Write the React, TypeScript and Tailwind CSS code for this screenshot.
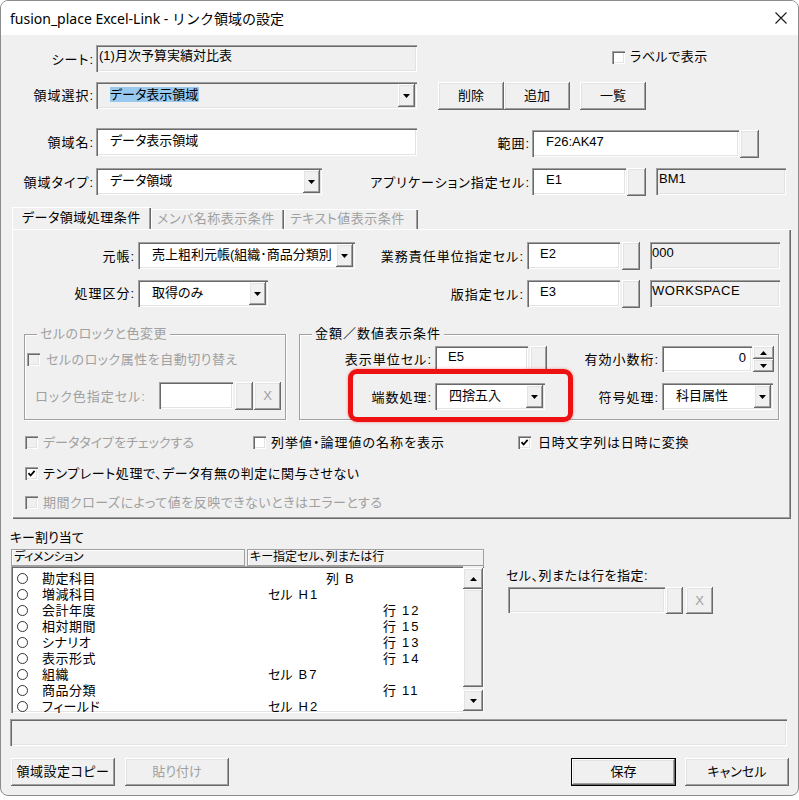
import React from "react";

const SUNK =
  "shadow-[inset_1px_1px_0_#a0a0a0,inset_2px_2px_0_#696969,inset_-1px_-1px_0_#ffffff,inset_-2px_-2px_0_#e3e3e3]";
const RAISE =
  "shadow-[inset_-1px_-1px_0_#696969,inset_1px_1px_0_#ffffff,inset_-2px_-2px_0_#a0a0a0,inset_2px_2px_0_#e3e3e3]";

type P = { cls?: string; children?: React.ReactNode };

function L({ cls = "", children }: P) {
  return (
    <div className={`shrink-0 text-right tracking-[1px] leading-[16px] whitespace-nowrap ${cls}`}>{children}</div>
  );
}

function TB({ cls = "", children }: P) {
  return (
    <div className={`shrink-0 ${SUNK} leading-[16px] whitespace-nowrap overflow-hidden ${cls}`}>{children}</div>
  );
}

function Btn({ cls = "", children }: P) {
  return (
    <div className={`shrink-0 ${RAISE} bg-[#f0f0f0] flex items-center justify-center leading-[16px] ${cls}`}>
      {children}
    </div>
  );
}

function Down() {
  return (
    <svg width="7" height="4" viewBox="0 0 7 4">
      <path d="M0 0H7L3.5 4Z" fill="#000" />
    </svg>
  );
}
function Up() {
  return (
    <svg width="7" height="4" viewBox="0 0 7 4">
      <path d="M0 4H7L3.5 0Z" fill="#000" />
    </svg>
  );
}

function Combo({ cls = "", children, bg = "bg-white" }: P & { bg?: string }) {
  return (
    <div className={`shrink-0 ${SUNK} ${bg} h-[27px] flex items-stretch p-[2px] ${cls}`}>
      <div className="flex-1 pl-[12px] pt-[3px] leading-[16px] whitespace-nowrap overflow-hidden">{children}</div>
      <div className={`${RAISE} w-[17px] bg-[#f0f0f0] flex items-center justify-center`}>
        <Down />
      </div>
    </div>
  );
}

function Check({ checked = false, disabled = false }: { checked?: boolean; disabled?: boolean }) {
  return (
    <span
      className={`shrink-0 w-[13px] h-[13px] ${SUNK} ${disabled ? "bg-[#f0f0f0]" : "bg-white"} flex items-center justify-center`}
    >
      {checked && (
        <svg width="9" height="9" viewBox="0 0 9 9">
          <path d="M1.5 4.2L3.6 6.5L7.6 1.8" stroke="#000" strokeWidth="1.8" fill="none" />
        </svg>
      )}
    </span>
  );
}

const rows: [string, "col" | "cell" | "row", string, string][] = [
  ["勘定科目", "col", "列", "B"],
  ["増減科目", "cell", "セル", "H1"],
  ["会計年度", "row", "行", "12"],
  ["相対期間", "row", "行", "15"],
  ["シナリオ", "row", "行", "13"],
  ["表示形式", "row", "行", "14"],
  ["組織", "cell", "セル", "B7"],
  ["商品分類", "row", "行", "11"],
  ["フィールド", "cell", "セル", "H2"],
];

const keyMl = { col: "ml-[58px]", cell: "ml-0", row: "ml-[115px]" };

export default function App() {
  return (
    <div className="w-[799px] h-[800px] bg-white overflow-hidden text-[13px] text-black font-['Liberation_Sans','Noto_Sans_CJK_JP',sans-serif] [font-feature-settings:'palt']">
      <div className="w-[799px] h-[796px] flex flex-col rounded-[8px] border border-[#8c8c8c] bg-[#f0f0f0] overflow-hidden">
        {/* title bar */}
        <div className="h-[34px] shrink-0 bg-white flex items-center justify-between pl-[9px] pr-[11px]">
          <span className="text-[14px] font-['Noto_Sans','Noto_Sans_CJK_JP',sans-serif] [font-feature-settings:normal]">
            fusion_place Excel-Link - リンク領域の設定
          </span>
          <svg width="12" height="12" viewBox="0 0 12 12">
            <path d="M0.5 0.5L11.5 11.5M11.5 0.5L0.5 11.5" stroke="#1a1a1a" strokeWidth="1.1" />
          </svg>
        </div>

        {/* row 1 */}
        <div className="flex items-start mt-[10px] h-[27px]">
          <L cls="w-[93px] pt-[7px]">シート:</L>
          <TB cls="ml-[2px] w-[321px] h-[27px] bg-[#f0f0f0] pl-[3px] pt-[3px]">(1)月次予算実績対比表</TB>
          <div className="ml-[195px] mt-[4px] flex items-center gap-[5px]">
            <Check />
            <span className="leading-[16px] tracking-[0.5px]">ラベルで表示</span>
          </div>
        </div>

        {/* row 2 */}
        <div className="flex items-start mt-[10px] h-[28px]">
          <L cls="w-[93px] pt-[6px]">領域選択:</L>
          <Combo cls="ml-[2px] w-[321px]" bg="bg-[#f0f0f0]">
            <span className="bg-[#99c9ef] pr-[1px]">データ表示領域</span>
          </Combo>
          <Btn cls="ml-[21px] w-[66px] h-[28px]">削除</Btn>
          <Btn cls="w-[66px] h-[28px]">追加</Btn>
          <Btn cls="ml-[10px] w-[66px] h-[28px]">一覧</Btn>
        </div>

        {/* row 3 */}
        <div className="flex items-start mt-[18px] h-[30px]">
          <L cls="w-[93px] pt-[7px]">領域名:</L>
          <TB cls="ml-[2px] w-[321px] h-[28px] bg-white pl-[14px] pt-[5px]">データ表示領域</TB>
          <L cls="w-[113px] pt-[8px]">範囲:</L>
          <TB cls="ml-[2px] mt-[2px] w-[207px] h-[27px] bg-white pl-[14px] pt-[4px]">F26:AK47</TB>
          <Btn cls="ml-[1px] mt-[2px] w-[19px] h-[28px]" />
        </div>

        {/* row 4 */}
        <div className="flex items-start mt-[10px] h-[28px]">
          <L cls="w-[93px] pt-[7px]">領域タイプ:</L>
          <Combo cls="ml-[2px] w-[226px]">データ領域</Combo>
          <L cls="w-[208px] pt-[7px] tracking-[0.3px]">アプリケーション指定セル:</L>
          <TB cls="ml-[2px] w-[94px] h-[27px] bg-white pl-[14px] pt-[4px]">E1</TB>
          <Btn cls="ml-[1px] w-[19px] h-[28px]" />
          <TB cls="ml-[10px] w-[130px] h-[27px] bg-[#f0f0f0] pl-[3px] pt-[3px]">BM1</TB>
        </div>

        {/* tabs */}
        <div className="flex items-end mt-[11px] ml-[11px] h-[22px]">
          <div className="w-[139px] h-[22px] bg-[#f0f0f0] shadow-[inset_1px_1px_0_#ffffff,inset_-1px_0_0_#696969,inset_-2px_0_0_#a0a0a0] pl-[10px] pt-[3px] leading-[16px] tracking-[0.5px] relative z-10">
            データ領域処理条件
          </div>
          <div className="w-[133px] h-[20px] shadow-[inset_1px_1px_0_#ffffff,inset_-1px_0_0_#696969,inset_-2px_0_0_#a0a0a0] pl-[6px] pt-[2px] leading-[16px] tracking-[0.5px] text-[#a0a0a0]">
            メンバ名称表示条件
          </div>
          <div className="w-[134px] h-[20px] shadow-[inset_1px_1px_0_#ffffff,inset_-1px_0_0_#696969,inset_-2px_0_0_#a0a0a0] pl-[6px] pt-[2px] leading-[16px] tracking-[0.5px] text-[#a0a0a0]">
            テキスト値表示条件
          </div>
        </div>

        {/* panel */}
        <div className="ml-[11px] w-[779px] h-[290px] shrink-0 flex flex-col shadow-[inset_1px_1px_0_#ffffff,inset_-1px_-1px_0_#696969,inset_-2px_-2px_0_#a0a0a0]">
          {/* row A */}
          <div className="flex items-start mt-[13px] h-[28px]">
            <L cls="w-[123px] pt-[7px]">元帳:</L>
            <Combo cls="ml-[3px] w-[217px]">売上粗利元帳(組織･商品分類別</Combo>
            <L cls="w-[169px] pt-[7px]">業務責任単位指定セル:</L>
            <TB cls="ml-[3px] w-[93px] h-[27px] bg-white pl-[13px] pt-[4px]">E2</TB>
            <Btn cls="ml-[2px] w-[18px] h-[28px]" />
            <TB cls="ml-[10px] w-[130px] h-[27px] bg-[#f0f0f0] pl-[2px] pt-[3px]">000</TB>
          </div>
          {/* row B */}
          <div className="flex items-start mt-[10px] h-[28px]">
            <L cls="w-[123px] pt-[6px]">処理区分:</L>
            <Combo cls="ml-[3px] w-[130px]">取得のみ</Combo>
            <L cls="w-[256px] pt-[7px]">版指定セル:</L>
            <TB cls="ml-[3px] w-[93px] h-[27px] bg-white pl-[13px] pt-[4px]">E3</TB>
            <Btn cls="ml-[2px] w-[18px] h-[28px]" />
            <TB cls="ml-[10px] w-[130px] h-[27px] bg-[#f0f0f0] pl-[2px] pt-[3px] tracking-[0.5px]">WORKSPACE</TB>
          </div>

          {/* groups */}
          <div className="flex items-start mt-[26px] h-[86px]">
            <div className="relative ml-[12px] w-[262px] h-[86px] border border-[#a0a0a0] shadow-[inset_1px_1px_0_#ffffff,1px_1px_0_#ffffff] pl-[2px] pt-[18px]">
              <span className="absolute left-[12px] -top-[9px] px-[3px] bg-[#f0f0f0] leading-[16px] tracking-[0.5px] text-[#a0a0a0]">
                セルのロックと色変更
              </span>
              <div className="flex items-center gap-[6px] h-[13px]">
                <Check disabled />
                <span className="leading-[16px] tracking-[0.5px] text-[#a0a0a0]">セルのロック属性を自動切り替え</span>
              </div>
              <div className="flex items-start mt-[16px]">
                <L cls="w-[119px] pt-[7px] text-[#a0a0a0] tracking-[0.3px]">ロック色指定セル:</L>
                <TB cls="ml-[13px] w-[74px] h-[27px] bg-white" />
                <Btn cls="ml-[2px] w-[18px] h-[28px]" />
                <Btn cls="ml-[1px] w-[27px] h-[28px] text-[#a0a0a0]">X</Btn>
              </div>
            </div>

            <div className="relative ml-[13px] w-[480px] h-[86px] border border-[#a0a0a0] shadow-[inset_1px_1px_0_#ffffff,1px_1px_0_#ffffff] pt-[11px]">
              <span className="absolute left-[12px] -top-[9px] px-[3px] bg-[#f0f0f0] leading-[16px] tracking-[1px]">
                金額／数値表示条件
              </span>
              <div className="flex items-start h-[27px]">
                <L cls="w-[132px] pt-[6px]">表示単位セル:</L>
                <TB cls="ml-[3px] w-[93px] h-[26px] bg-white pl-[13px] pt-[3px]">E5</TB>
                <Btn cls="ml-[2px] w-[17px] h-[27px]" />
                <L cls="w-[112px] pt-[6px]">有効小数桁:</L>
                <TB cls="ml-[3px] w-[90px] h-[26px] bg-white pr-[6px] pt-[4px] text-right">0</TB>
                <div className="ml-[1px] w-[21px] h-[26px] flex flex-col">
                  <Btn cls="h-[13px]">
                    <Up />
                  </Btn>
                  <Btn cls="h-[13px]">
                    <Down />
                  </Btn>
                </div>
              </div>
              <div className="flex items-start mt-[10px] h-[27px]">
                <L cls="w-[132px] pt-[7px]">端数処理:</L>
                <Combo cls="ml-[3px] w-[110px]">四捨五入</Combo>
                <L cls="w-[114px] pt-[7px]">符号処理:</L>
                <Combo cls="ml-[3px] w-[111px]">科目属性</Combo>
              </div>
              <div className="pointer-events-none absolute left-[48px] top-[34px] w-[225px] h-[53px] border-[5px] border-[#ee1111] rounded-[9px] shadow-[0_0_3px_rgba(238,17,17,0.45)]" />
            </div>
          </div>

          {/* checkbox rows */}
          <div className="flex items-center mt-[16px] h-[13px]">
            <div className="ml-[13px] w-[228px] flex items-center gap-[5px]">
              <Check disabled />
              <span className="leading-[16px] text-[#a0a0a0]">データタイプをチェックする</span>
            </div>
            <div className="w-[265px] flex items-center gap-[5px]">
              <Check />
              <span className="leading-[16px] tracking-[1px]">列挙値・論理値の名称を表示</span>
            </div>
            <div className="flex items-center gap-[7px]">
              <Check checked />
              <span className="leading-[16px] tracking-[0.8px]">日時文字列は日時に変換</span>
            </div>
          </div>
          <div className="flex items-center mt-[18px] h-[13px] ml-[13px] gap-[5px]">
            <Check checked />
            <span className="leading-[16px] tracking-[0.6px]">テンプレート処理で、データ有無の判定に関与させない</span>
          </div>
          <div className="flex items-center mt-[16px] h-[13px] ml-[13px] gap-[5px]">
            <Check disabled />
            <span className="leading-[16px] tracking-[0.5px] text-[#a0a0a0]">
              期間クローズによって値を反映できないときはエラーとする
            </span>
          </div>
        </div>

        {/* key assignment */}
        <div className="mt-[11px] ml-[9px] leading-[16px]">キー割り当て</div>
        <div className="flex items-start mt-[3px]">
          <div className="ml-[10px] w-[473px] flex flex-col">
            <div className="flex h-[17px] gap-[2px]">
              <div className="w-[234px] h-[17px] border border-[#a0a0a0] shadow-[inset_1px_1px_0_#ffffff] pl-[2px] text-[12px] leading-[15px] tracking-[-0.3px]">
                ディメンション
              </div>
              <div className="w-[237px] h-[17px] border border-[#a0a0a0] shadow-[inset_1px_1px_0_#ffffff] pl-[2px] text-[12px] leading-[15px]">
                キー指定セル、列または行
              </div>
            </div>
            <div className={`h-[147px] bg-white ${SUNK} flex overflow-hidden`}>
              <div className="flex-1 pt-[4px] pb-[2px] pl-[2px] overflow-hidden">
                {rows.map(([name, t, unit, val]) => (
                  <div key={name} className="flex items-center h-[16px] leading-[15px] whitespace-nowrap">
                    <span className="ml-[4px] w-[11px] h-[11px] rounded-full border-[1.5px] border-[#333] shrink-0" />
                    <span className="ml-[14px] w-[226px] shrink-0 tracking-[0.5px]">{name}</span>
                    <span className={keyMl[t]}>{unit}</span>
                    <span className="ml-[6px] tracking-[2px]">{val}</span>
                  </div>
                ))}
              </div>
              <div className="w-[20px] mr-[1px] pt-[2px] pb-[2px] flex flex-col bg-[#f0f0f0]">
                <Btn cls="h-[21px]">
                  <Up />
                </Btn>
                <Btn cls="flex-1" />
                <Btn cls="mt-[3px] h-[21px]">
                  <Down />
                </Btn>
              </div>
            </div>
          </div>
          <div className="ml-[22px] mt-[19px] flex flex-col">
            <div className="leading-[16px] tracking-[0.5px]">セル、列または行を指定:</div>
            <div className="flex items-start mt-[3px]">
              <TB cls="w-[157px] h-[26px] bg-[#f0f0f0] ml-[2px]" />
              <Btn cls="ml-[1px] w-[17px] h-[27px]" />
              <Btn cls="ml-[3px] w-[27px] h-[27px] text-[#a0a0a0]">X</Btn>
            </div>
          </div>
        </div>

        {/* status */}
        <TB cls="mt-[6px] ml-[9px] w-[777px] h-[27px] bg-[#f0f0f0]" />

        {/* buttons */}
        <div className="flex items-start mt-[12px] h-[28px]">
          <Btn cls="ml-[10px] w-[104px] h-[28px] tracking-[0.5px]">領域設定コピー</Btn>
          <Btn cls="ml-[10px] w-[104px] h-[28px] text-[#a0a0a0]">貼り付け</Btn>
          <div className="ml-[342px] w-[105px] h-[28px] border border-black flex">
            <Btn cls="flex-1">保存</Btn>
          </div>
          <Btn cls="ml-[9px] w-[104px] h-[28px]">キャンセル</Btn>
        </div>
      </div>
    </div>
  );
}
